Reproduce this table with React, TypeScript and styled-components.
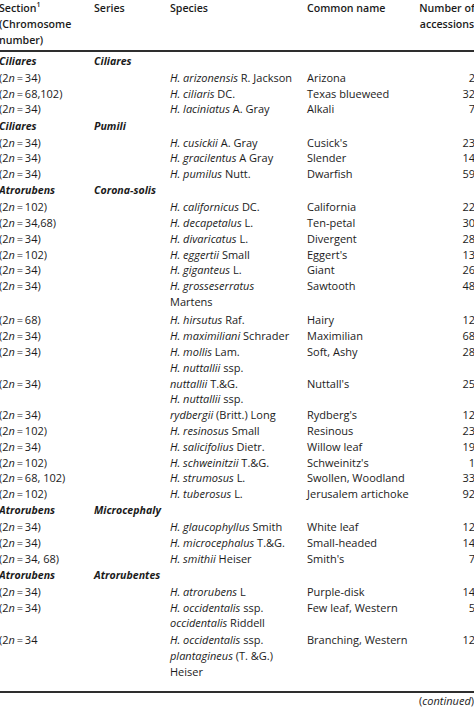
import React from 'react';
import styled, { createGlobalStyle } from 'styled-components';

const GlobalStyle = createGlobalStyle`
  html, body {
    margin: 0;
    padding: 0;
    background: #ffffff;
    overflow: hidden;
  }
`;

const Page = styled.div`
  width: 478px;
  margin-left: -1px;
  color: #1b1b1b;
  font-family: "Open Sans", "Noto Sans", sans-serif;
  font-size: 11px;
  line-height: 15.8px;
`;

const Grid = styled.div`
  display: grid;
  grid-template-columns: 95px 76px 137px 1fr 60px;
`;

const HeadCell = styled.div<{ $center?: boolean }>`
  font-weight: 600;
  font-size: 10.6px;
  line-height: 16px;
  white-space: nowrap;
  text-align: ${(p) => (p.$center ? 'center' : 'left')};
`;

const Sup = styled.sup`
  font-size: 7px;
  line-height: 0;
  vertical-align: 5px;
`;

const Rule = styled.div<{ $top?: number; $bottom?: number }>`
  height: 1.6px;
  background: #2e2e2e;
  margin-top: ${(p) => p.$top ?? 0}px;
  margin-bottom: ${(p) => p.$bottom ?? 0}px;
`;

const Cell = styled.div<{ $pt?: number; $pb?: number; $right?: boolean; $group?: boolean }>`
  white-space: nowrap;
  padding-top: ${(p) => p.$pt ?? 0}px;
  padding-bottom: ${(p) => p.$pb ?? 0}px;
  padding-right: ${(p) => (p.$right ? 2 : 0)}px;
  text-align: ${(p) => (p.$right ? 'right' : 'left')};
  font-weight: ${(p) => (p.$group ? 700 : 400)};
  font-style: ${(p) => (p.$group ? 'italic' : 'normal')};
  font-size: ${(p) => (p.$group ? '10.6px' : 'inherit')};
`;

const Continued = styled.div`
  text-align: right;
  margin-right: 3px;
`;

const TwoN = ({ v, open }: { v: string; open?: boolean }) => (
  <>
    (2<i>n</i>{'\u2009=\u2009'}
    {v}
    {open ? '' : ')'}
  </>
);

type Row = {
  group?: [string, string];
  sec?: React.ReactNode;
  species?: React.ReactNode;
  common?: string;
  num?: string;
  pb?: number;
};

const sp = (it: string, rest: string) => (
  <>
    <i>{it}</i> {rest}
  </>
);

const rows: Row[] = [
  { group: ['Ciliares', 'Ciliares'] },
  { sec: <TwoN v="34" />, species: sp('H. arizonensis', 'R. Jackson'), common: 'Arizona', num: '2' },
  { sec: <TwoN v="68,102" />, species: sp('H. ciliaris', 'DC.'), common: 'Texas blueweed', num: '32' },
  { sec: <TwoN v="34" />, species: sp('H. laciniatus', 'A. Gray'), common: 'Alkali', num: '7' },
  { group: ['Ciliares', 'Pumili'] },
  { sec: <TwoN v="34" />, species: sp('H. cusickii', 'A. Gray'), common: "Cusick's", num: '23' },
  { sec: <TwoN v="34" />, species: sp('H. gracilentus', 'A Gray'), common: 'Slender', num: '14' },
  { sec: <TwoN v="34" />, species: sp('H. pumilus', 'Nutt.'), common: 'Dwarfish', num: '59' },
  { group: ['Atrorubens', 'Corona-solis'] },
  { sec: <TwoN v="102" />, species: sp('H. californicus', 'DC.'), common: 'California', num: '22' },
  { sec: <TwoN v="34,68" />, species: sp('H. decapetalus', 'L.'), common: 'Ten-petal', num: '30' },
  { sec: <TwoN v="34" />, species: sp('H. divaricatus', 'L.'), common: 'Divergent', num: '28' },
  { sec: <TwoN v="102" />, species: sp('H. eggertii', 'Small'), common: "Eggert's", num: '13' },
  { sec: <TwoN v="34" />, species: sp('H. giganteus', 'L.'), common: 'Giant', num: '26' },
  {
    sec: <TwoN v="34" />,
    species: (
      <>
        <i>H. grosseserratus</i>
        <br />
        Martens
      </>
    ),
    common: 'Sawtooth',
    num: '48',
    pb: 2.5,
  },
  { sec: <TwoN v="68" />, species: sp('H. hirsutus', 'Raf.'), common: 'Hairy', num: '12' },
  { sec: <TwoN v="34" />, species: sp('H. maximiliani', 'Schrader'), common: 'Maximilian', num: '68' },
  { sec: <TwoN v="34" />, species: sp('H. mollis', 'Lam.'), common: 'Soft, Ashy', num: '28' },
  { species: sp('H. nuttallii', 'ssp.') },
  { sec: <TwoN v="34" />, species: sp('nuttallii', 'T.&G.'), common: "Nuttall's", num: '25' },
  { species: sp('H. nuttallii', 'ssp.') },
  { sec: <TwoN v="34" />, species: sp('rydbergii', '(Britt.) Long'), common: "Rydberg's", num: '12' },
  { sec: <TwoN v="102" />, species: sp('H. resinosus', 'Small'), common: 'Resinous', num: '23' },
  { sec: <TwoN v="34" />, species: sp('H. salicifolius', 'Dietr.'), common: 'Willow leaf', num: '19' },
  { sec: <TwoN v="102" />, species: sp('H. schweinitzii', 'T.&G.'), common: "Schweinitz's", num: '1' },
  { sec: <TwoN v="68, 102" />, species: sp('H. strumosus', 'L.'), common: 'Swollen, Woodland', num: '33' },
  { sec: <TwoN v="102" />, species: sp('H. tuberosus', 'L.'), common: 'Jerusalem artichoke', num: '92' },
  { group: ['Atrorubens', 'Microcephaly'] },
  { sec: <TwoN v="34" />, species: sp('H. glaucophyllus', 'Smith'), common: 'White leaf', num: '12' },
  { sec: <TwoN v="34" />, species: sp('H. microcephalus', 'T.&G.'), common: 'Small-headed', num: '14' },
  { sec: <TwoN v="34, 68" />, species: sp('H. smithii', 'Heiser'), common: "Smith's", num: '7' },
  { group: ['Atrorubens', 'Atrorubentes'] },
  { sec: <TwoN v="34" />, species: sp('H. atrorubens', 'L'), common: 'Purple-disk', num: '14' },
  {
    sec: <TwoN v="34" />,
    species: (
      <>
        <i>H. occidentalis</i> ssp.
        <br />
        <i>occidentalis</i> Riddell
      </>
    ),
    common: 'Few leaf, Western',
    num: '5',
    pb: 1,
  },
  {
    sec: <TwoN v="34" open />,
    species: (
      <>
        <i>H. occidentalis</i> ssp.
        <br />
        <i>plantagineus</i> (T. &amp;G.)
        <br />
        Heiser
      </>
    ),
    common: 'Branching, Western',
    num: '12',
  },
];

const App = () => (
  <Page>
    <GlobalStyle />
    <Grid>
      <HeadCell>
        Section<Sup>1</Sup>
        <br />
        (Chromosome
        <br />
        number)
      </HeadCell>
      <HeadCell>Series</HeadCell>
      <HeadCell>Species</HeadCell>
      <HeadCell>Common name</HeadCell>
      <HeadCell $center>
        Number of
        <br />
        accessions
      </HeadCell>
    </Grid>
    <Rule $top={2} $bottom={2.5} />
    <Grid>
      {rows.map((r, i) => {
        if (r.group) {
          const pt = i === 0 ? 0 : 1.5;
          return (
            <React.Fragment key={i}>
              <Cell $group $pt={pt}>{r.group[0]}</Cell>
              <Cell $group $pt={pt}>{r.group[1]}</Cell>
              <Cell $pt={pt} />
              <Cell $pt={pt} />
              <Cell $pt={pt} />
            </React.Fragment>
          );
        }
        const pb = r.pb ?? 0;
        return (
          <React.Fragment key={i}>
            <Cell $pb={pb}>{r.sec}</Cell>
            <Cell $pb={pb} />
            <Cell $pb={pb}>{r.species}</Cell>
            <Cell $pb={pb}>{r.common}</Cell>
            <Cell $pb={pb} $right>
              {r.num}
            </Cell>
          </React.Fragment>
        );
      })}
    </Grid>
    <Rule $top={11.5} />
    <Continued>
      (<i>continued</i>)
    </Continued>
  </Page>
);

export default App;
